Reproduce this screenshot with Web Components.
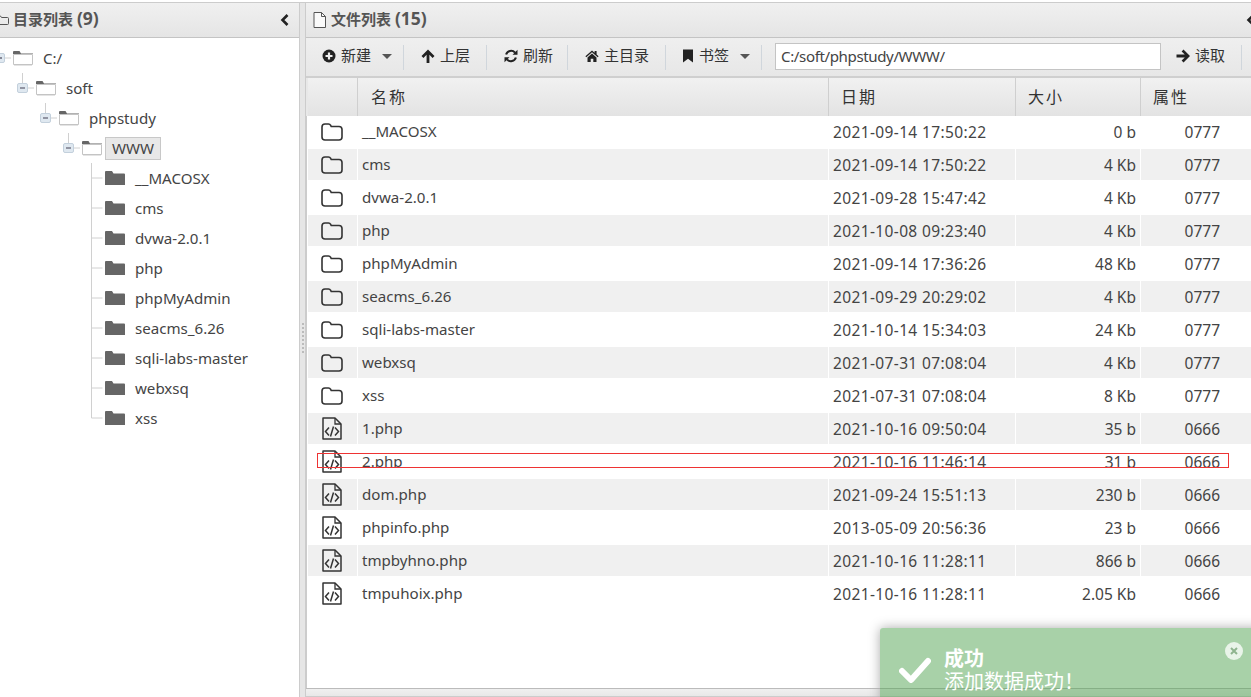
<!DOCTYPE html>
<html lang="zh">
<head>
<meta charset="utf-8">
<title>文件管理</title>
<style>
  html, body { margin: 0; height: 697px; overflow: hidden; background: #fff; }
  body {
    font-family: "Noto Sans", "Noto Sans CJK SC", sans-serif;
    font-size: 15.1px;
    color: #333;
  }
  .count { font-size: 17.5px; }
</style>
</head>
<body>
<template id="icons">
  <svg data-name="folder-line" viewBox="0 0 20 16" width="20" height="16"><path d="M.5 4.500h19v10H.5z" fill="#fff" stroke="#c4c4c4"/><path d="M1 15.500h18" stroke="#e4e4e4"/><path d="M0 4V2q0-1 1-1h5.500L8 3.500h12V4z" fill="#666"/></svg>
  <svg data-name="folder-fill" viewBox="0 0 20 16" width="20" height="16"><path d="M0 15V2q0-1 1-1h6l1.500 2.500H19q1 0 1 1V15z" fill="#666"/></svg>
  <svg data-name="folder" viewBox="0 0 22 18" width="22" height="18"><path d="M1 4q0-3 3-3h3.500q1.500 0 2 1.200L10.200 3.500H18q3 0 3 3V14q0 3-3 3H4q-3 0-3-3z" fill="none" stroke="#333" stroke-width="1.600"/></svg>
  <svg data-name="file-code" viewBox="0 0 20 23" width="20" height="23"><path d="M1 1h12l6 6v15H1z" fill="none" stroke="#333" stroke-width="1.500" stroke-linejoin="round"/><path d="M13 1v6h6" fill="none" stroke="#333" stroke-width="1.300"/><path d="M7 10.500l-3.500 4 3.500 4M13 10.500l3.500 4-3.500 4M11.500 9.500l-3 10" fill="none" stroke="#333" stroke-width="1.500"/></svg>
  <svg data-name="plus" viewBox="0 0 14 14" width="14" height="14"><circle cx="7" cy="7" r="6.500" fill="#222"/><path d="M7 3.500v7M3.500 7h7" stroke="#eee" stroke-width="2.200"/></svg>
  <svg data-name="up" viewBox="0 0 14 14" width="14" height="14"><path d="M7 .5l6.500 6.500-1.900 1.900-3.200-3.200V14H5.600V5.700L2.400 8.900.5 7z" fill="#222"/></svg>
  <svg data-name="refresh" viewBox="0 0 14 14" width="14" height="14"><path d="M2.100 5.500A5.200 5.200 0 0 1 11 3.600M11.900 8.500A5.200 5.200 0 0 1 3 10.400" fill="none" stroke="#222" stroke-width="2.100"/><path d="M13.500 .8v5h-5zM.5 13.200v-5h5z" fill="#222"/></svg>
  <svg data-name="home" viewBox="0 0 14 14" width="14" height="14"><path d="M.4 7.200L7 1.500l2.600 2.200V2h2v3.400l2 1.800-.9 1L7 3.300 1.300 8.200z" fill="#222"/><path d="M2.500 8.500L7 4.600l4.500 3.900V13H8.300V9.800H5.700V13H2.500z" fill="#222"/></svg>
  <svg data-name="bookmark" viewBox="0 0 12 14" width="12" height="14"><path d="M1 .5h10v13L6 9.800 1 13.500z" fill="#222"/></svg>
  <svg data-name="right" viewBox="0 0 14 14" width="14" height="14"><path d="M7.500.5L14 7l-6.500 6.500-1.900-1.900 3.200-3.200H.5V5.600h8.300L5.600 2.400z" fill="#222"/></svg>
  <svg data-name="back" viewBox="0 0 10 12" width="10" height="12"><path d="M7.500 1L2.500 6l5 5" fill="none" stroke="#222" stroke-width="2.600"/></svg>
  <svg data-name="doc" viewBox="0 0 13 16" width="13" height="16"><path d="M1 .5h7.500l4 4v11H1z" fill="#fafafa" stroke="#555"/><path d="M8.500 .5v4h4" fill="none" stroke="#555"/></svg>
  <svg data-name="folder-small" viewBox="0 0 13 11" width="13" height="11"><path d="M.5 2q0-1 1-1h3l1 1.500h6q1 0 1 1v5q0 1-1 1h-10q-1 0-1-1z" fill="none" stroke="#555"/></svg>
  <svg data-name="check" viewBox="0 0 32 26" width="32" height="26"><path d="M3 14l9 9L29 4" fill="none" stroke="#fff" stroke-width="6" stroke-linecap="round" stroke-linejoin="round"/></svg>
</template>

<fm-app>
  <fm-panel slot="left" style="--panel-width:299px">
    <fm-title icon="folder-small">目录列表 <span class="count">(9)</span></fm-title>
    <fm-tree>
      <fm-node kind="root" open label="C:/">
        <fm-node kind="open" open label="soft">
          <fm-node kind="open" open label="phpstudy">
            <fm-node kind="open" open selected label="WWW">
              <fm-node kind="leaf" label="__MACOSX"></fm-node>
              <fm-node kind="leaf" label="cms"></fm-node>
              <fm-node kind="leaf" label="dvwa-2.0.1"></fm-node>
              <fm-node kind="leaf" label="php"></fm-node>
              <fm-node kind="leaf" label="phpMyAdmin"></fm-node>
              <fm-node kind="leaf" label="seacms_6.26"></fm-node>
              <fm-node kind="leaf" label="sqli-labs-master"></fm-node>
              <fm-node kind="leaf" label="webxsq"></fm-node>
              <fm-node kind="last" label="xss"></fm-node>
            </fm-node>
          </fm-node>
        </fm-node>
      </fm-node>
    </fm-tree>
  </fm-panel>
  <fm-files slot="right">
    <fm-title icon="doc">文件列表 <span class="count">(15)</span></fm-title>
    <fm-toolbar>
      <fm-btn icon="plus" caret>新建</fm-btn>
      <fm-btn icon="up">上层</fm-btn>
      <fm-btn icon="refresh" style="padding-right:14px">刷新</fm-btn>
      <fm-btn icon="home">主目录</fm-btn>
      <fm-btn icon="bookmark" caret style="padding-left:16px">书签</fm-btn>
      <fm-path value="C:/soft/phpstudy/WWW/"></fm-path>
      <fm-btn icon="right" style="padding-left:15px;margin-right:9px">读取</fm-btn>
    </fm-toolbar>
    <fm-head></fm-head>
    <fm-list>
      <fm-row type="folder" name="__MACOSX" date="2021-09-14 17:50:22" size="0 b" attr="0777"></fm-row>
      <fm-row type="folder" name="cms" date="2021-09-14 17:50:22" size="4 Kb" attr="0777"></fm-row>
      <fm-row type="folder" name="dvwa-2.0.1" date="2021-09-28 15:47:42" size="4 Kb" attr="0777"></fm-row>
      <fm-row type="folder" name="php" date="2021-10-08 09:23:40" size="4 Kb" attr="0777"></fm-row>
      <fm-row type="folder" name="phpMyAdmin" date="2021-09-14 17:36:26" size="48 Kb" attr="0777"></fm-row>
      <fm-row type="folder" name="seacms_6.26" date="2021-09-29 20:29:02" size="4 Kb" attr="0777"></fm-row>
      <fm-row type="folder" name="sqli-labs-master" date="2021-10-14 15:34:03" size="24 Kb" attr="0777"></fm-row>
      <fm-row type="folder" name="webxsq" date="2021-07-31 07:08:04" size="4 Kb" attr="0777"></fm-row>
      <fm-row type="folder" name="xss" date="2021-07-31 07:08:04" size="8 Kb" attr="0777"></fm-row>
      <fm-row type="file" name="1.php" date="2021-10-16 09:50:04" size="35 b" attr="0666"></fm-row>
      <fm-row type="file" name="2.php" date="2021-10-16 11:46:14" size="31 b" attr="0666" marked></fm-row>
      <fm-row type="file" name="dom.php" date="2021-09-24 15:51:13" size="230 b" attr="0666"></fm-row>
      <fm-row type="file" name="phpinfo.php" date="2013-05-09 20:56:36" size="23 b" attr="0666"></fm-row>
      <fm-row type="file" name="tmpbyhno.php" date="2021-10-16 11:28:11" size="866 b" attr="0666"></fm-row>
      <fm-row type="file" name="tmpuhoix.php" date="2021-10-16 11:28:11" size="2.05 Kb" attr="0666"></fm-row>
    </fm-list>
    <fm-status></fm-status>
  </fm-files>
  <fm-toast slot="toast" heading="成功">添加数据成功！</fm-toast>
</fm-app>

<script>
const iconBox = document.getElementById('icons').content;

function icon(name) {
  const svg = iconBox.querySelector(`[data-name="${name}"]`);
  return svg ? svg.outerHTML : '';
}

class Base extends HTMLElement {
  constructor() {
    super();
    this.attachShadow({ mode: 'open' });
  }
}

class FmApp extends Base {
  connectedCallback() {
    this.shadowRoot.innerHTML = `
      <style>
        :host { display: block; height: 697px; position: relative; overflow: hidden; padding-top: 3px; box-sizing: border-box; }
        .top { position: absolute; left: 0; right: 0; top: 2px; height: 1px; background: #ccc; }
        .main { display: flex; height: 694px; }
        .split { width: 5px; flex: none; background: #e6e6e6; border-left: 1px solid #ccc; border-right: 1px solid #ccc; display: flex; align-items: center; justify-content: center; padding-bottom: 24px; box-sizing: content-box; }
        .grip { width: 2px; height: 30px; background: repeating-linear-gradient(#bbb 0 2px, transparent 2px 4px); }
      </style>
      <div class="top"></div>
      <div class="main">
        <slot name="left"></slot>
        <div class="split"><div class="grip"></div></div>
        <slot name="right"></slot>
      </div>
      <slot name="toast"></slot>`;
  }
}

class FmPanel extends Base {
  connectedCallback() {
    this.shadowRoot.innerHTML = `
      <style>
        :host { display: flex; flex-direction: column; flex: none; width: var(--panel-width); overflow: hidden; }
      </style>
      <slot></slot>`;
  }
}

class FmFiles extends Base {
  connectedCallback() {
    this.shadowRoot.innerHTML = `
      <style>
        :host { display: flex; flex-direction: column; flex: 1; min-width: 0; }
      </style>
      <slot></slot>`;
  }
}

class FmTitle extends Base {
  connectedCallback() {
    const name = this.getAttribute('icon');
    const small = name === 'folder-small';
    this.shadowRoot.innerHTML = `
      <style>
        :host {
          display: flex; align-items: center; flex: none; height: 34px; box-sizing: content-box;
          background: linear-gradient(#f0f0f0, #e5e5e5);
          border-bottom: 1px solid #c4c4c4;
          font-size: 15px; font-weight: 700; color: #555;
        }
        .ic { display: flex; margin: 0 ${small ? '4px' : '5px'} 0 ${small ? '-4px' : '7px'}; }
        .text { flex: 1; margin-top: -4px; line-height: 22px; }
        .end { display: flex; margin-right: ${small ? '9px' : '-5px'}; }
      </style>
      <span class="ic">${icon(name)}</span>
      <span class="text"><slot></slot></span>
      <span class="end">${icon('back')}</span>`;
  }
}

class FmToolbar extends Base {
  connectedCallback() {
    this.shadowRoot.innerHTML = `
      <style>
        :host {
          display: flex; align-items: center; flex: none; height: 38px;
          background: linear-gradient(#efefef, #e7e7e7);
          border-bottom: 2px solid #cfcfcf;
        }
      </style>
      <slot></slot>`;
  }
}

class FmBtn extends Base {
  connectedCallback() {
    const caret = this.hasAttribute('caret');
    this.shadowRoot.innerHTML = `
      <style>
        :host {
          display: flex; align-items: center; gap: 5px; height: 25px; flex: none;
          padding: 0 16px 0 17px;
          border-right: 1px solid #d0d6dc;
          font-size: 15px; color: #333;
        }
        :host(:first-child) { padding-left: 16px; }
        .ic { display: flex; margin-top: -2px; }
        .label { margin-top: -5px; line-height: 22px; }
        .caret { width: 0; height: 0; margin: -1px -5px 0 6px; border: 5.500px solid transparent; border-top: 5.500px solid #555; border-bottom: 0; }
      </style>
      <span class="ic">${icon(this.getAttribute('icon'))}</span>
      <span class="label"><slot></slot></span>
      ${caret ? '<span class="caret"></span>' : ''}`;
  }
}

class FmPath extends Base {
  connectedCallback() {
    this.shadowRoot.innerHTML = `
      <style>
        :host { display: block; flex: 1; min-width: 0; padding: 0 0 0 13px; }
        .box {
          height: 27px; box-sizing: border-box; background: #fff; border: 1px solid #c4c4c4; margin-top: -1px;
          padding: 0 5px; line-height: 25px; font-size: 15.100px; letter-spacing: -.4px; color: #444;
        }
      </style>
      <div class="box">${this.getAttribute('value')}</div>`;
  }
}

class FmHead extends Base {
  connectedCallback() {
    const cells = ['', '名称', '日期', '大小', '属性'];
    this.shadowRoot.innerHTML = `
      <style>
        :host {
          display: grid; grid-template-columns: 50px 471px 187px 125px 1fr; flex: none; height: 38px;
          background: linear-gradient(#f1f1f1, #e3e3e3);
          border-left: 2px solid #e8e8e8;
          font-size: 16px; letter-spacing: 2px; color: #333;
        }
        div { display: flex; align-items: center; padding: 0 0 3px 12px; border-right: 1px solid #cfcfcf; }
        div:nth-child(2), div:nth-child(3) { padding-left: 13px; }
        div:last-child { border-right: 0; }
      </style>
      ${cells.map(c => `<div>${c}</div>`).join('')}`;
  }
}

class FmList extends Base {
  connectedCallback() {
    this.shadowRoot.innerHTML = `
      <style>
        :host { display: block; flex: 1; min-height: 0; position: relative; border-left: 1px solid #ccc; padding-left: 1px; }
      </style>
      <slot></slot>`;
  }
}

class FmRow extends Base {
  connectedCallback() {
    const get = n => this.getAttribute(n);
    const isFolder = get('type') === 'folder';
    const marked = this.hasAttribute('marked');
    this.shadowRoot.innerHTML = `
      <style>
        :host {
          display: grid; grid-template-columns: 50px 471px 187px 125px 1fr; height: 33px;
          box-sizing: border-box; border-bottom: 2px solid #fff; position: relative;
          color: #444; font-size: 15.100px;
        }
        :host(:nth-of-type(even)) { background: #f0f0f0; }
        div { display: flex; align-items: center; border-right: 1px solid #fff; white-space: nowrap; }
        .ic { padding-left: ${isFolder ? '13px' : '14px'}; }
        .name { padding: 0 0 2px 4px; }
        .date { padding-left: 4px; font-size: 15.500px; letter-spacing: .37px; }
        .size { justify-content: flex-end; padding-right: 4px; font-size: 15.500px; }
        .attr { justify-content: flex-end; padding-right: 31px; border-right: 0; font-size: 15.500px; }
        /* the dragged row: a white band hides the text under the red frame */
        .band { position: absolute; left: 50px; right: 0; top: 21px; height: 10px; background: #fff; border: 0; }
        .mark { position: absolute; left: 9px; top: 7px; width: 910px; height: 13px; border: 1px solid #e33; }
      </style>
      <div class="ic">${icon(isFolder ? 'folder' : 'file-code')}</div>
      <div class="name">${get('name')}</div>
      <div class="date">${get('date')}</div>
      <div class="size">${get('size')}</div>
      <div class="attr">${get('attr')}</div>
      ${marked ? '<div class="band"></div><div class="mark"></div>' : ''}`;
  }
}

class FmStatus extends Base {
  connectedCallback() {
    this.shadowRoot.innerHTML = `
      <style>
        :host { display: block; flex: none; height: 7px; background: linear-gradient(#f0f0f0, #e8e8e8); border-top: 1px solid #bbb; border-bottom: 1px solid #ccc; }
      </style>`;
  }
}

class FmTree extends Base {
  connectedCallback() {
    this.shadowRoot.innerHTML = `
      <style>
        :host { display: block; flex: 1; padding-top: 5px; margin-left: -12px; background: #fff; }
      </style>
      <slot></slot>`;
  }
}

// connector drawn per row, 23 wide and 30 high, centre line on x=11.5
function connector(kind) {
  const line = 'stroke="#d0d0d0" fill="none"';
  const box = `<rect x="6.500" y="10.500" width="10" height="9" rx="1.500" fill="#dfe8f0" stroke="#c3d0dc"/><path d="M9 15h5" stroke="#667" stroke-width="1.300"/>`;
  if (kind === 'root') return `<path d="M17 15h6" ${line}/>${box}`;
  if (kind === 'open') return `<path d="M11.500 0v10M17 15h6" ${line}/>${box}`;
  if (kind === 'leaf') return `<path d="M11.500 0v30M11.500 15h11" ${line}/>`;
  return `<path d="M11.500 0v15M11.500 15h11" ${line}/>`;
}

class FmNode extends Base {
  connectedCallback() {
    const kind = this.getAttribute('kind');
    const hasKids = this.hasAttribute('open');
    const selected = this.hasAttribute('selected');
    this.shadowRoot.innerHTML = `
      <style>
        :host { display: block; }
        .row { display: flex; align-items: center; height: 30px; }
        .sw { display: block; flex: none; }
        .ic { display: flex; margin-left: 2px; }
        .label {
          margin-left: 3px; padding: 0 6px; border: 1px solid transparent; height: 21px; line-height: 21px;
          white-space: nowrap; color: #444;
        }
        .selected { background: #e8e8e8; border-color: #c8c8c8; }
        .kids { padding-left: 23px; }
      </style>
      <div class="row">
        <svg class="sw" width="23" height="30" viewBox="0 0 23 30">${connector(kind)}</svg>
        <span class="ic">${icon(hasKids ? 'folder-line' : 'folder-fill')}</span>
        <span class="label ${selected ? 'selected' : ''}">${this.getAttribute('label')}</span>
      </div>
      ${hasKids ? '<div class="kids"><slot></slot></div>' : ''}`;
  }
}

class FmToast extends Base {
  connectedCallback() {
    this.shadowRoot.innerHTML = `
      <style>
        :host {
          position: absolute; left: 880px; right: -20px; top: 628px; height: 90px;
          background: rgba(81, 163, 81, 0.5); border-radius: 3px;
          box-shadow: 0 0 12px #aaa; color: #fff;
          display: flex; align-items: flex-start; gap: 13px; padding: 20px 0 0 19px; box-sizing: border-box;
        }
        .ic { display: flex; margin-top: 9px; }
        h4 { margin: 0; font-size: 20px; line-height: 21px; font-weight: 700; }
        p { margin: 2px 0 0; font-size: 20px; line-height: 22px; }
        .close {
          position: absolute; left: 345px; top: 14px; width: 18px; height: 18px; border-radius: 50%;
          background: rgba(255, 255, 255, 0.75); display: flex; align-items: center; justify-content: center;
        }
      </style>
      <span class="ic">${icon('check')}</span>
      <div><h4>${this.getAttribute('heading')}</h4><p><slot></slot></p></div>
      <span class="close"><svg width="8" height="8" viewBox="0 0 8 8"><path d="M1 1l6 6M7 1L1 7" stroke="#8fb48f" stroke-width="2"/></svg></span>`;
  }
}

customElements.define('fm-app', FmApp);
customElements.define('fm-panel', FmPanel);
customElements.define('fm-files', FmFiles);
customElements.define('fm-title', FmTitle);
customElements.define('fm-toolbar', FmToolbar);
customElements.define('fm-btn', FmBtn);
customElements.define('fm-path', FmPath);
customElements.define('fm-head', FmHead);
customElements.define('fm-list', FmList);
customElements.define('fm-row', FmRow);
customElements.define('fm-status', FmStatus);
customElements.define('fm-tree', FmTree);
customElements.define('fm-node', FmNode);
customElements.define('fm-toast', FmToast);
</script>
</body>
</html>
